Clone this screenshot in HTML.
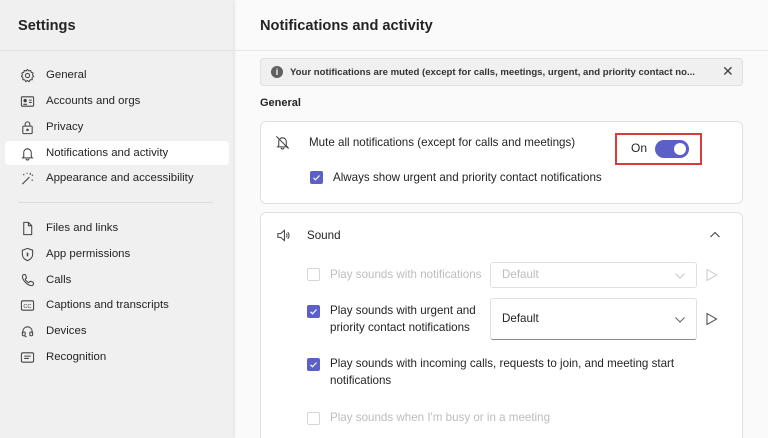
<!DOCTYPE html>
<html><head><style>
*{box-sizing:border-box;margin:0;padding:0}
html{width:768px;height:438px;overflow:hidden}
body{width:768px;height:438px;overflow:hidden;font-family:"Liberation Sans",sans-serif;background:#fafafa;position:relative;color:#242424}
.side{position:absolute;left:0;top:0;width:233px;height:438px;background:#f0f0f0;box-shadow:1px 0 3px rgba(0,0,0,.12)}
.abs{position:absolute}
.ttl{font-size:14.6px;font-weight:bold}
.it{position:absolute;left:46px;font-size:11.4px;line-height:14px;color:#242424}
.ic{position:absolute;left:20px;width:15px;height:15px}
.sel{position:absolute;left:5px;top:141px;width:224px;height:24px;background:#fff;border-radius:4px}
.card{position:absolute;left:260px;width:483px;background:#fff;border:1px solid #e0e0e0;border-radius:6px}
.cb{position:absolute;width:13px;height:13px;border-radius:2px}
.on{background:#5b5fc7}
.off{border:1px solid #d6d6d6;background:#fff}
.t{position:absolute;font-size:11.6px;line-height:17px}
.dis{color:#bdbdbd}
.dd{position:absolute;left:490px;width:207px;border:1px solid #e0e0e0;border-radius:3px;background:#fff}
</style></head><body>
<div class="side">
<div class="abs ttl" style="left:18px;top:18px">Settings</div>
<div class="abs" style="left:0;top:50px;width:233px;height:1px;background:#e3e3e3"></div>
<div class="sel"></div>
<svg class="ic" style="top:68px" viewBox="0 0 16 16" fill="none" stroke="#424242" stroke-width="1.1"><circle cx="8" cy="8" r="2.2"/><path d="M8 1.5l1.4 1.6 2-.5.6 2 2 .8-.6 2 1.1 1.6-1.6 1.3.1 2.1-2.1.2L9.7 14.5 8 13.3l-1.7 1.2-1.2-1.9-2.1-.2.1-2.1L1.5 9l1.1-1.6-.6-2 2-.8.6-2 2 .5z"/></svg>
<div class="it" style="top:68px">General</div>
<svg class="ic" style="top:94px" viewBox="0 0 16 16" fill="none" stroke="#424242" stroke-width="1.1"><rect x="1.5" y="3" width="13" height="10" rx="1"/><circle cx="5.5" cy="7" r="1.3" fill="#424242"/><path d="M3.5 11h4M9.5 6.5h3M9.5 9h3"/></svg>
<div class="it" style="top:94px">Accounts and orgs</div>
<svg class="ic" style="top:120px" viewBox="0 0 16 16" fill="none" stroke="#424242" stroke-width="1.1"><rect x="3" y="6.5" width="10" height="8" rx="1"/><path d="M5.5 6.5V4.5a2.5 2.5 0 015 0v2"/><circle cx="8" cy="10.5" r=".8" fill="#424242"/></svg>
<div class="it" style="top:120px">Privacy</div>
<svg class="ic" style="top:146px" viewBox="0 0 16 16" fill="none" stroke="#424242" stroke-width="1.1"><path d="M4 11.5V7a4 4 0 018 0v4.5l1.2 1.2H2.8z"/><path d="M6.5 13.5a1.5 1.5 0 003 0"/></svg>
<div class="it" style="top:146px">Notifications and activity</div>
<svg class="ic" style="top:171px" viewBox="0 0 16 16" fill="none" stroke="#424242" stroke-width="1.2"><path d="M2.5 14L10 6.5"/><path d="M11 2v2M12.5 4.5h1.5M4 3v1.5M13 9v1.5M7 2.5h1"/></svg>
<div class="it" style="top:171px">Appearance and accessibility</div>
<div class="abs" style="left:18px;top:202px;width:195px;height:1px;background:#dcdcdc"></div>
<svg class="ic" style="top:221px" viewBox="0 0 16 16" fill="none" stroke="#424242" stroke-width="1.1"><path d="M4 1.5h5l3.5 3.5v9.5H4z"/><path d="M9 1.5V5h3.5"/></svg>
<div class="it" style="top:221px">Files and links</div>
<svg class="ic" style="top:247px" viewBox="0 0 16 16" fill="none" stroke="#424242" stroke-width="1.1"><path d="M8 1.5l5.5 2v4.5c0 3-2.5 5.5-5.5 6.5C5 13.5 2.5 11 2.5 8V3.5z"/><path d="M8 6v4" stroke-width="1.6"/></svg>
<div class="it" style="top:247px">App permissions</div>
<svg class="ic" style="top:273px" viewBox="0 0 16 16" fill="none" stroke="#424242" stroke-width="1.1"><path d="M4 1.5l2 .5 1 3-1.5 1.5c.7 1.8 2 3 3.8 3.8L11 8.8l3 1 .5 2-1.5 1.7C8 13.5 2.5 8 2.5 3z"/></svg>
<div class="it" style="top:273px">Calls</div>
<svg class="ic" style="top:298px" viewBox="0 0 16 16" fill="none" stroke="#424242" stroke-width="1.1"><rect x="1.5" y="3" width="13" height="10" rx="1.5"/><text x="3.6" y="10.6" font-size="6" font-family="Liberation Sans" fill="#424242" stroke="none">CC</text></svg>
<div class="it" style="top:298px">Captions and transcripts</div>
<svg class="ic" style="top:324px" viewBox="0 0 16 16" fill="none" stroke="#424242" stroke-width="1.1"><path d="M3 10V8a5 5 0 0110 0v2"/><rect x="2.5" y="8.5" width="3" height="4" rx="1"/><rect x="10.5" y="8.5" width="3" height="4" rx="1"/><path d="M5 13.5h2"/></svg>
<div class="it" style="top:324px">Devices</div>
<svg class="ic" style="top:350px" viewBox="0 0 16 16" fill="none" stroke="#424242" stroke-width="1.1"><rect x="1.5" y="3" width="13" height="10" rx="1.5"/><path d="M4.5 6.5h7M4.5 9h5"/></svg>
<div class="it" style="top:350px">Recognition</div>
</div>

<div class="abs ttl" style="left:260px;top:18px">Notifications and activity</div>
<div class="abs" style="left:233px;top:50px;width:535px;height:1px;background:#e8e8e8"></div>
<div class="abs" style="left:260px;top:58px;width:483px;height:28px;background:#f0f0f0;border:1px solid #e0e0e0;border-radius:3px"></div>
<div class="abs" style="left:271px;top:66px;width:12px;height:12px;border-radius:50%;background:#616161;color:#fff;font-size:9px;font-weight:bold;text-align:center;line-height:12px">i</div>
<div class="abs" style="left:290px;top:66px;font-size:9.6px;font-weight:bold;color:#333;line-height:13px;white-space:nowrap">Your notifications are muted (except for calls, meetings, urgent, and priority contact no...</div>
<div class="abs" style="left:722px;top:63px;font-size:14px;color:#424242">✕</div>
<div class="abs" style="left:260px;top:97px;font-size:11px;font-weight:bold">General</div>

<div class="card" style="top:121px;height:83px"></div>
<svg class="abs" style="left:275px;top:135px;width:15px;height:15px" viewBox="0 0 16 16" fill="none" stroke="#424242" stroke-width="1.1"><path d="M4 11.5V7a4 4 0 018 0v4.5l1.2 1.2H2.8z"/><path d="M6.5 13.5a1.5 1.5 0 003 0M1.5 1.5l13 13"/></svg>
<div class="t" style="left:309px;top:134px">Mute all notifications (except for calls and meetings)</div>
<div class="abs" style="left:615px;top:133px;width:87px;height:32px;border:2px solid #d93a3a"></div>
<div class="abs" style="left:631px;top:141px;font-size:12px">On</div>
<div class="abs" style="left:655px;top:140px;width:34px;height:18px;border-radius:9px;background:#5b5fc7"><div style="position:absolute;right:3px;top:3px;width:12px;height:12px;border-radius:50%;background:#fff"></div></div>
<div class="cb on" style="left:310px;top:171px"><svg width="13" height="13" viewBox="0 0 13 13"><path d="M3.5 6.8l2 2 4-4.3" stroke="#fff" stroke-width="1.2" fill="none"/></svg></div>
<div class="t" style="left:333px;top:169px">Always show urgent and priority contact notifications</div>

<div class="card" style="top:212px;height:240px"></div>
<svg class="abs" style="left:276px;top:228px;width:15px;height:15px" viewBox="0 0 16 16" fill="none" stroke="#424242" stroke-width="1.1"><path d="M2 6h3l4-3.5v11L5 10H2z"/><path d="M11 6a3 3 0 010 4M12.5 4.5a5 5 0 010 7"/></svg>
<div class="t" style="left:307px;top:227px">Sound</div>
<svg class="abs" style="left:709px;top:230px;width:12px;height:10px" viewBox="0 0 12 10"><path d="M1.5 7l4.5-4.5L10.5 7" stroke="#424242" stroke-width="1.1" fill="none"/></svg>

<div class="cb off" style="left:307px;top:268px"></div>
<div class="t dis" style="left:330px;top:266px">Play sounds with notifications</div>
<div class="dd" style="top:262px;height:26px"><span style="position:absolute;left:11px;top:5px;font-size:11.6px;color:#bdbdbd">Default</span><svg style="position:absolute;right:10px;top:9px" width="12" height="8" viewBox="0 0 12 8"><path d="M1.5 1.5l4.5 4.5 4.5-4.5" stroke="#c8c8c8" fill="none"/></svg></div>
<svg class="abs" style="left:705px;top:268px;width:13px;height:14px" viewBox="0 0 13 14"><path d="M2 1.5l9.5 5.5L2 12.5z" stroke="#c8c8c8" fill="none"/></svg>

<div class="cb on" style="left:307px;top:305px"><svg width="13" height="13" viewBox="0 0 13 13"><path d="M3.5 6.8l2 2 4-4.3" stroke="#fff" stroke-width="1.2" fill="none"/></svg></div>
<div class="t" style="left:330px;top:302px">Play sounds with urgent and<br>priority contact notifications</div>
<div class="dd" style="top:298px;height:42px;border-bottom:1px solid #8a8a8a"><span style="position:absolute;left:11px;top:13px;font-size:11.6px">Default</span><svg style="position:absolute;right:10px;top:17px" width="12" height="8" viewBox="0 0 12 8"><path d="M1.5 1.5l4.5 4.5 4.5-4.5" stroke="#616161" fill="none"/></svg></div>
<svg class="abs" style="left:705px;top:312px;width:13px;height:14px" viewBox="0 0 13 14"><path d="M2 1.5l9.5 5.5L2 12.5z" stroke="#424242" fill="none"/></svg>

<div class="cb on" style="left:307px;top:358px"><svg width="13" height="13" viewBox="0 0 13 13"><path d="M3.5 6.8l2 2 4-4.3" stroke="#fff" stroke-width="1.2" fill="none"/></svg></div>
<div class="t" style="left:330px;top:355px">Play sounds with incoming calls, requests to join, and meeting start<br>notifications</div>

<div class="cb off" style="left:307px;top:412px"></div>
<div class="t dis" style="left:330px;top:409px">Play sounds when I'm busy or in a meeting</div>
</body></html>
